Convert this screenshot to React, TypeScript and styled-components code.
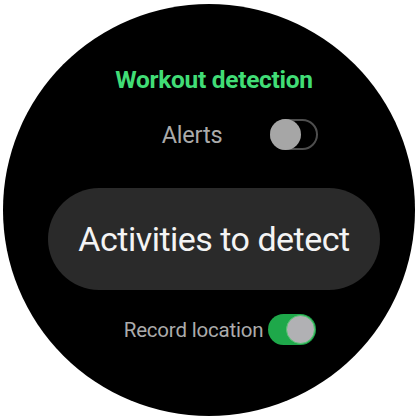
import styled, { createGlobalStyle } from 'styled-components'

const GlobalStyle = createGlobalStyle`
  html, body {
    margin: 0;
    padding: 0;
    background: #fff;
  }
  body {
    font-family: Roboto, 'Liberation Sans', sans-serif;
  }
`

const Page = styled.div`
  width: 420px;
  height: 420px;
  padding: 4px 0 0 3px;
  box-sizing: border-box;
  background: #fff;
`

const Watch = styled.div`
  width: 412px;
  height: 412px;
  border-radius: 50%;
  background: #000;
  display: flex;
  flex-direction: column;
  align-items: center;
  padding-top: 61px;
  box-sizing: border-box;
`

const Title = styled.h1`
  margin: 0;
  height: 30px;
  line-height: 30px;
  font-size: 24.5px;
  font-weight: 700;
  color: #41dd76;
  letter-spacing: -0.3px;
  transform: translateX(5px);
`

type RowProps = { $shift?: number; $top: number; $gap: number }

const SettingRow = styled.div<RowProps>`
  display: flex;
  align-items: center;
  height: 31px;
  gap: ${({ $gap }) => $gap}px;
  margin-top: ${({ $top }) => $top}px;
  transform: translateX(${({ $shift }) => $shift ?? 0}px);
`

const Label = styled.span<{ $size: number }>`
  font-size: ${({ $size }) => $size}px;
  color: #ababab;
  letter-spacing: -0.2px;
`

const Track = styled.div<{ $on: boolean }>`
  position: relative;
  width: 48px;
  height: 31px;
  border-radius: 16px;
  box-sizing: border-box;
  background: ${({ $on }) => ($on ? '#1ea84a' : 'transparent')};
  border: ${({ $on }) => ($on ? 'none' : '2px solid #4e4e4e')};
`

const Thumb = styled.div<{ $on: boolean }>`
  position: absolute;
  top: ${({ $on }) => ($on ? '1px' : '-2px')};
  ${({ $on }) => ($on ? 'right: 1px;' : 'left: -2px;')}
  width: ${({ $on }) => ($on ? '29px' : '31px')};
  height: ${({ $on }) => ($on ? '29px' : '31px')};
  border-radius: 50%;
  box-sizing: border-box;
  background: ${({ $on }) => ($on ? '#b1b1b4' : '#a6a6a6')};
  border: ${({ $on }) => ($on ? '1px solid #58c474' : 'none')};
`

const Toggle = ({ on }: { on: boolean }) => (
  <Track $on={on}>
    <Thumb $on={on} />
  </Track>
)

const ActionPill = styled.button`
  margin-top: 38px;
  width: 332px;
  height: 102px;
  border: none;
  border-radius: 51px;
  background: #2a2a2a;
  color: #f4f4f4;
  font-family: Roboto, 'Liberation Sans', sans-serif;
  font-size: 34px;
  letter-spacing: -0.5px;
  transform: translateX(5px);
  padding: 0;
`

export default function App() {
  return (
    <>
      <GlobalStyle />
      <Page>
        <Watch>
          <Title>Workout detection</Title>
          <SettingRow $top={24} $shift={31} $gap={48}>
            <Label $size={23.5}>Alerts</Label>
            <Toggle on={false} />
          </SettingRow>
          <ActionPill>Activities to detect</ActionPill>
          <SettingRow $top={24} $shift={11} $gap={5}>
            <Label $size={20.5}>Record location</Label>
            <Toggle on />
          </SettingRow>
        </Watch>
      </Page>
    </>
  )
}
